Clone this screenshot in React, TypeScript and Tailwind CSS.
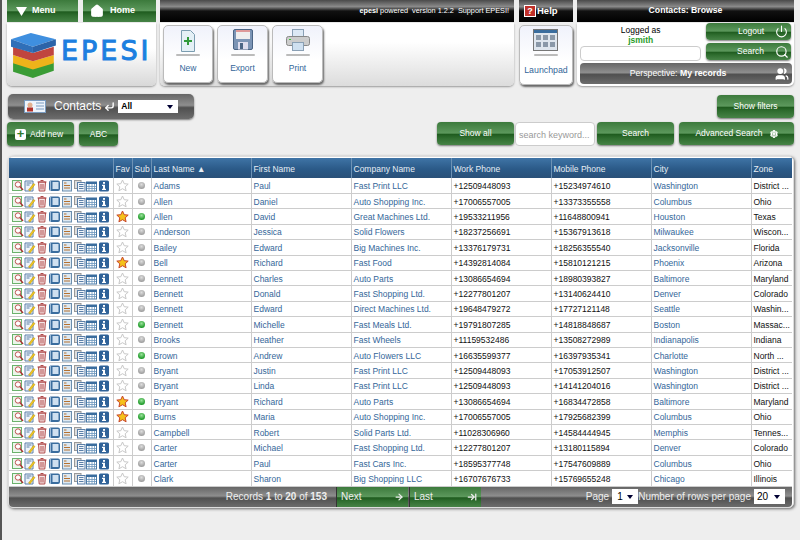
import { Search, Power, Users, Home, Settings, ArrowRight, ArrowRightToLine, CornerDownLeft } from 'lucide-react'

const rows = [
  ['Adams', 'Paul', 'Fast Print LLC', '+12509448093', '+15234974610', 'Washington', 'District ...', 0, 0],
  ['Allen', 'Daniel', 'Auto Shopping Inc.', '+17006557005', '+13373355558', 'Columbus', 'Ohio', 0, 0],
  ['Allen', 'David', 'Great Machines Ltd.', '+19533211956', '+11648800941', 'Houston', 'Texas', 1, 1],
  ['Anderson', 'Jessica', 'Solid Flowers', '+18237256691', '+15367913618', 'Milwaukee', 'Wiscon...', 0, 0],
  ['Bailey', 'Edward', 'Big Machines Inc.', '+13376179731', '+18256355540', 'Jacksonville', 'Florida', 0, 0],
  ['Bell', 'Richard', 'Fast Food', '+14392814084', '+15810121215', 'Phoenix', 'Arizona', 1, 0],
  ['Bennett', 'Charles', 'Auto Parts', '+13086654694', '+18980393827', 'Baltimore', 'Maryland', 0, 0],
  ['Bennett', 'Donald', 'Fast Shopping Ltd.', '+12277801207', '+13140624410', 'Denver', 'Colorado', 0, 0],
  ['Bennett', 'Edward', 'Direct Machines Ltd.', '+19648479272', '+17727121148', 'Seattle', 'Washin...', 0, 0],
  ['Bennett', 'Michelle', 'Fast Meals Ltd.', '+19791807285', '+14818848687', 'Boston', 'Massac...', 0, 1],
  ['Brooks', 'Heather', 'Fast Wheels', '+11159532486', '+13508272989', 'Indianapolis', 'Indiana', 0, 0],
  ['Brown', 'Andrew', 'Auto Flowers LLC', '+16635599377', '+16397935341', 'Charlotte', 'North ...', 0, 1],
  ['Bryant', 'Justin', 'Fast Print LLC', '+12509448093', '+17053912507', 'Washington', 'District ...', 0, 0],
  ['Bryant', 'Linda', 'Fast Print LLC', '+12509448093', '+14141204016', 'Washington', 'District ...', 0, 0],
  ['Bryant', 'Richard', 'Auto Parts', '+13086654694', '+16834472858', 'Baltimore', 'Maryland', 1, 1],
  ['Burns', 'Maria', 'Auto Shopping Inc.', '+17006557005', '+17925682399', 'Columbus', 'Ohio', 1, 1],
  ['Campbell', 'Robert', 'Solid Parts Ltd.', '+11028306960', '+14584444945', 'Memphis', 'Tennes...', 0, 0],
  ['Carter', 'Michael', 'Fast Shopping Ltd.', '+12277801207', '+13180115894', 'Denver', 'Colorado', 0, 0],
  ['Carter', 'Paul', 'Fast Cars Inc.', '+18595377748', '+17547609889', 'Columbus', 'Ohio', 0, 0],
  ['Clark', 'Sharon', 'Big Shopping LLC', '+16707676733', '+15769655248', 'Chicago', 'Illinois', 0, 0],
] as const

const greenFill = 'bg-[linear-gradient(#3c7a3c_0%,#5c985c_48%,#1f5c1f_54%,#2f6d2f_70%,#468346_100%)]'
const greenBtn = `flex items-center justify-center text-white text-[8.5px] whitespace-nowrap ${greenFill}`
const raised = 'rounded-[4px] shadow-[0_1px_2px_#777]'
const darkBar = 'bg-[linear-gradient(#4a4a4a_0%,#8a8a8a_30%,#111_50%,#000_100%)]'
const grayBar = 'bg-[linear-gradient(#666_0%,#8e8e8e_45%,#505050_55%,#6c6c6c_100%)]'
const linkCell = 'text-[#336699] px-[2px] pt-[2px] leading-[11px] border-r border-[#ccc] overflow-hidden whitespace-nowrap'
const cell = 'text-[#111] px-[2px] pt-[2px] leading-[11px] border-r border-[#ccc] overflow-hidden whitespace-nowrap'

function RowIcons() {
  return (
    <svg width="98" height="13" viewBox="0 0 98 13" className="block">
      <rect x="0.500" y="1.500" width="9" height="10" fill="#eaf6ea" stroke="#6cb26c" />
      <circle cx="6" cy="5.500" r="2.700" fill="#fff" stroke="#c05050" />
      <path d="M8 7.500l3 3.500" stroke="#a33" strokeWidth="1.400" />
      <path d="M13 2h8v10h-8z" fill="#eef3fa" stroke="#5a7fa8" />
      <path d="M14.500 4h5M14.500 6h3" stroke="#5a7fa8" />
      <path d="M16.500 11l5-6.500 1.500 1-5 6.500z" fill="#f2c81e" stroke="#b28a10" strokeWidth=".5" />
      <path d="M26.500 3h7l-.7 9h-5.600zM25.500 3h9M28.500 1.500h3" fill="#f6e6e6" stroke="#b04a4a" />
      <path d="M29 5v5.500M31 5v5.500" stroke="#b04a4a" />
      <rect x="37" y="1.500" width="11" height="10.500" rx="2" fill="#3a6d9e" />
      <rect x="40.500" y="3" width="6" height="7" fill="#cfe0f0" />
      <path d="M38.500 1.500v10.500" stroke="#9dbbd8" />
      <rect x="50.500" y="1.500" width="9" height="10.500" fill="#dce8f2" stroke="#6b8eae" />
      <path d="M52 4h2.500M52 6.500h6M52 9h6" stroke="#b5702f" />
      <rect x="62.500" y="1.500" width="6.500" height="8" fill="#ddd" stroke="#999" />
      <rect x="65.500" y="3.500" width="7.500" height="8.500" fill="#f2f6fa" stroke="#5a7fa8" />
      <path d="M67 5.500h4.500M67 7.500h4.500M67 9.500h4.500" stroke="#5a7fa8" />
      <rect x="74.500" y="3.500" width="10" height="8.500" fill="#fff" stroke="#4b7aa6" />
      <rect x="74" y="2.500" width="11" height="2.500" fill="#3a6d9e" />
      <path d="M77 5v7M80 5v7M82.500 5v7M75 7.500h9M75 9.500h9" stroke="#6b95bd" strokeWidth=".8" />
      <rect x="87" y="1.500" width="10" height="11" rx="1.500" fill="#2f6298" />
      <rect x="91" y="3" width="2" height="1.800" fill="#fff" />
      <path d="M90 5.800h3v4h1V11h-4V9.800h1v-2.800h-1z" fill="#fff" />
    </svg>
  )
}

function Star({ on }: { on: boolean }) {
  return (
    <svg width="13" height="13" viewBox="0 0 13 13" className="block mx-auto">
      <path
        d="M6.500 1l1.700 3.700 4 .4-3 2.700.9 4-3.600-2.100-3.600 2.100.9-4-3-2.700 4-.4z"
        fill={on ? '#f5c21b' : '#fff'}
        stroke={on ? '#c8452a' : '#c8c8c8'}
      />
    </svg>
  )
}

function Dot({ on }: { on: boolean }) {
  return (
    <div
      className={
        on
          ? 'w-[7px] h-[7px] mx-auto rounded-full bg-[radial-gradient(circle_at_50%_35%,#9be39b,#1f9a2a_70%)]'
          : 'w-[7px] h-[7px] mx-auto rounded-full bg-[radial-gradient(circle_at_50%_35%,#ddd,#a0a0a0_70%)]'
      }
    />
  )
}

function BigButton({ label, children, w }: { label: string; children: React.ReactNode; w: string }) {
  return (
    <div className={`${w} h-[58px] flex flex-col items-center rounded-[5px] border border-[#bbb] bg-[linear-gradient(#f0f2fb,#fff_60%)] shadow-[1px_2px_2px_#666] pt-[3px]`}>
      <div className="h-[24px]">{children}</div>
      <div className="w-[24px] h-[2px] mt-[1px] rounded-full bg-[#bbb]" />
      <div className="text-[#336699] text-[8.500px] mt-[6px] leading-[12px]">{label}</div>
    </div>
  )
}

export default function App() {
  return (
    <div className="w-[800px] h-[540px] overflow-hidden bg-[#eeeeee] border-l-2 border-[#555] pl-[5px] pr-[6px] text-[8.500px] font-['Liberation_Sans',sans-serif]">
      <div className="flex gap-[4px]">
        <div className="w-[149px] shrink-0">
          <div className="flex gap-[5px] h-[22px]">
            <div className={`${greenBtn} w-[71px] gap-[5px] text-[9px] font-bold justify-start! pl-[9px]`}>
              <svg width="11" height="9" viewBox="0 0 11 9"><path d="M0 0h11L5.500 9z" fill="#fff" /></svg>
              Menu
            </div>
            <div className={`${greenBtn} w-[73px] gap-[6px] text-[9px] font-bold justify-start! pl-[7px]`}>
              <Home size={14} fill="#fff" />
              Home
            </div>
          </div>
          <div className="mt-[1px] h-[63px] rounded-b-[5px] bg-[linear-gradient(#fff_40%,#d8d8d8)] shadow-[0_1px_2px_#999] flex items-center pl-[4px]">
            <svg width="48" height="48" viewBox="0 0 46 46" className="shrink-0">
              <path d="M2 30l19 6 20-6v8l-20 7-19-6z" fill="#3a9c35" />
              <path d="M2 23l19 6 20-6v8l-20 6-19-6z" fill="#eeb31a" />
              <path d="M2 15l19 6 20-6v8l-20 6-19-6z" fill="#c0453f" />
              <path d="M0 8l19-6 24 6-22 7z" fill="#3f8fdf" />
              <path d="M0 8l21 7v6L0 15z" fill="#2f6fb8" />
              <path d="M21 15l22-7v6l-22 7z" fill="#2c63a8" />
            </svg>
            <span className="text-[#1c7fe0] text-[27px] leading-none font-['DejaVu_Sans',sans-serif] tracking-[3px] [-webkit-text-stroke:1px_#1c7fe0] ml-[2px] mt-[-8px]">EPESI</span>
          </div>
        </div>

        <div className="w-[354px] shrink-0">
          <div className={`${darkBar} h-[22px] flex items-center justify-end pr-[5px] gap-[4px] text-[7.300px] text-white`}>
            <span><b>epesi</b> powered</span>
            <span>version 1.2.2</span>
            <span>Support EPESI!</span>
          </div>
          <div className="mt-[1px] h-[63px] rounded-b-[5px] bg-[linear-gradient(#fff_30%,#dcdcdc)] shadow-[0_1px_2px_#999] flex gap-[4px] pl-[3px] pt-[2px]">
            <BigButton label="New" w="w-[50px]">
              <svg width="16" height="24" viewBox="0 0 16 24">
                <path d="M1.500 1.500h9l4 4v17h-13z" fill="#e4f0f6" stroke="#7a9cb0" />
                <path d="M7 8h2v3h3v2H9v3H7v-3H4v-2h3z" fill="#2f9a3a" />
              </svg>
            </BigButton>
            <BigButton label="Export" w="w-[51px]">
              <svg width="20" height="22" viewBox="0 0 20 22">
                <rect x="0.500" y="0.500" width="19" height="20" rx="1.500" fill="#7b94b5" stroke="#4b6585" />
                <rect x="3" y="1" width="14" height="9" fill="#eee" />
                <path d="M3 2h14" stroke="#c44" />
                <rect x="5" y="13" width="10" height="7.500" fill="#dde" />
                <rect x="7" y="14" width="3" height="6" fill="#4b6585" />
              </svg>
            </BigButton>
            <BigButton label="Print" w="w-[51px]">
              <svg width="24" height="22" viewBox="0 0 24 22">
                <rect x="6.500" y="0.500" width="11" height="8" fill="#dce8f4" stroke="#8aa0b5" />
                <rect x="0.500" y="7.500" width="23" height="9" rx="2" fill="#ccc" stroke="#888" />
                <rect x="6.500" y="13.500" width="11" height="8" fill="#cfe0f0" stroke="#8aa0b5" />
                <rect x="3" y="10" width="2" height="1" fill="#3c3" />
              </svg>
            </BigButton>
          </div>
        </div>

        <div className="w-[54px] ml-[1px] shrink-0">
          <div className={`${darkBar} h-[22px] flex items-center pl-[5px] gap-[1px] text-white text-[9.500px] font-bold`}>
            <span className="w-[12px] h-[12px] bg-[#c0302a] border border-white text-[9px] leading-[10px] text-center">?</span>
            Help
          </div>
          <div className="mt-[3px] h-[60px] flex flex-col items-center rounded-[5px] border border-[#bbb] bg-[linear-gradient(#f0f2fb,#fff_60%)] shadow-[1px_2px_2px_#666] pt-[3px]">
            <svg width="26" height="24" viewBox="0 0 26 24">
              <rect x="0.500" y="0.500" width="24" height="21" fill="#dfe6ee" stroke="#777" />
              <rect x="1" y="1" width="23" height="3" fill="#3a6d9e" />
              <path d="M3 6h5v5H3zM10 6h5v5h-5zM17 6h5v5h-5zM3 13h5v5H3zM10 13h5v5h-5zM17 13h5v5h-5z" fill="#8a98a8" />
            </svg>
            <div className="w-[24px] h-[2px] mt-[1px] rounded-full bg-[#bbb]" />
            <div className="text-[#336699] text-[8.800px] mt-[8px] leading-[12px]">Launchpad</div>
          </div>
        </div>

        <div className="w-[217px] shrink-0">
          <div className={`${darkBar} h-[22px] flex items-center justify-center text-white text-[8.700px] font-bold`}>Contacts: Browse</div>
          <div className="mt-[1px] h-[63px] bg-white rounded-b-[5px] shadow-[0_1px_2px_#999] px-[3px]">
            <div className="flex gap-[5px]">
              <div className="w-[122px]">
                <div className="text-center text-[8.500px] leading-[10px] mt-[2px] text-black">Logged as</div>
                <div className="text-center text-[8.500px] leading-[10px] font-bold text-[#2a9d2a]">jsmith</div>
                <div className="h-[15px] mt-[1px] rounded-[4px] border border-[#ccc] bg-white" />
              </div>
              <div className="w-[85px]">
                <div className={`${greenBtn} ${raised} h-[17px] justify-end! gap-[11px] pr-[3px]`}>
                  Logout
                  <Power size={13} />
                </div>
                <div className={`${greenBtn} ${raised} h-[17px] mt-[3px] justify-end! gap-[11px] pr-[2px]`}>
                  Search
                  <Search size={14} />
                </div>
              </div>
            </div>
            <div className={`${grayBar} mt-[2px] h-[21px] w-[212px] rounded-[4px] flex items-center text-white text-[8.700px]`}>
              <div className="flex-1 text-center pl-[1px]">Perspective: <b>My records</b></div>
              <Users size={14} fill="#fff" className="mr-[3px]" />
            </div>
          </div>
        </div>
      </div>

      <div className="flex justify-between mt-[8px]">
        <div className={`${grayBar} ml-[1px] w-[186px] h-[25px] rounded-[5px] shadow-[0_1px_2px_#777] flex items-center pl-[16px] text-white`}>
          <svg width="22" height="13" viewBox="0 0 22 13">
            <rect x="0.500" y="0.500" width="21" height="12" fill="#eef4fb" stroke="#7a9cc0" />
            <circle cx="6" cy="5" r="2.500" fill="#e3b18f" />
            <rect x="3" y="7.500" width="6" height="4" fill="#b3322a" />
            <path d="M12 3h8M12 6h8M12 9h8" stroke="#7a9cc0" />
          </svg>
          <span className="text-[12px] ml-[8px] mb-[2px]">Contacts</span>
          <CornerDownLeft size={11} className="ml-[3px]" strokeWidth={3} />
          <div className="ml-[3px] w-[60px] h-[13px] bg-white text-black text-[8.500px] leading-[13px] pl-[3px] font-bold relative">
            All
            <svg width="6" height="4" viewBox="0 0 6 4" className="absolute right-[5px] top-[5px]"><path d="M0 0h6L3 4z" fill="#003" /></svg>
          </div>
        </div>
        <div className={`${greenBtn} ${raised} w-[77px] h-[23px] mt-[1px]`}>Show filters</div>
      </div>

      <div className="flex mt-[3px] h-[24px] items-start">
        <div className={`${greenBtn} ${raised} w-[67px] h-[24px] gap-[4px] justify-start! pl-[8px]`}>
          <span className="w-[11px] h-[11px] rounded-[2px] bg-white text-[#2f7a2f] text-[13px] font-bold leading-[10px] text-center">+</span>
          Add new
        </div>
        <div className={`${greenBtn} ${raised} w-[39px] h-[24px] ml-[5px]`}>ABC</div>
        <div className={`${greenBtn} ${raised} w-[77px] h-[23px] ml-[319px]`}>Show all</div>
        <div className="w-[80px] h-[24px] ml-[1px] rounded-[4px] border border-[#ccc] bg-white text-[#999] text-[9px] leading-[24px] pl-[3px] whitespace-nowrap">search keyword...</div>
        <div className={`${greenBtn} ${raised} w-[77px] h-[23px] ml-[2px]`}>Search</div>
        <div className={`${greenBtn} ${raised} w-[115px] h-[23px] ml-[5px] gap-[7px]`}>
          Advanced Search
          <Settings size={8} strokeWidth={4} />
        </div>
      </div>

      <div className="ml-[1px] mt-[10px] w-[786px] h-[352px] bg-white rounded-[5px] pt-[1px] pr-[1px] shadow-[1px_1px_3px_#666] border border-[#ddd]">
        <table className="w-full table-fixed border-collapse text-[8.500px]">
          <colgroup>
            <col className="w-[104px]" />
            <col className="w-[19px]" />
            <col className="w-[19px]" />
            <col className="w-[100px]" />
            <col className="w-[100px]" />
            <col className="w-[100px]" />
            <col className="w-[100px]" />
            <col className="w-[100px]" />
            <col className="w-[100px]" />
            <col />
          </colgroup>
          <thead>
            <tr className="h-[20px] text-[#e8eef4] bg-[linear-gradient(#3f74a6,#2b5a88_55%,#2a5078)] text-left">
              {['', 'Fav', 'Sub', 'Last Name \u25B2', 'First Name', 'Company Name', 'Work Phone', 'Mobile Phone', 'City', 'Zone'].map((h, i) => (
                <th key={i} className="font-normal px-[2px] pt-[2px] leading-[11px] border-r border-[#6d92b5] last:border-r-0">{h}</th>
              ))}
            </tr>
          </thead>
          <tbody>
            {rows.map((r, i) => (
              <tr key={i} className="h-[15.420px] border-b border-[#ccc] leading-[11px]">
                <td className="pl-[3px] pr-0 border-r border-[#ccc]"><div className="h-[13px] overflow-hidden"><RowIcons /></div></td>
                <td className="border-r border-[#ccc]"><Star on={!!r[7]} /></td>
                <td className="border-r border-[#ccc]"><Dot on={!!r[8]} /></td>
                <td className={linkCell}>{r[0]}</td>
                <td className={linkCell}>{r[1]}</td>
                <td className={linkCell}>{r[2]}</td>
                <td className={cell}>{r[3]}</td>
                <td className={cell}>{r[4]}</td>
                <td className={linkCell}>{r[5]}</td>
                <td className="text-[#111] px-[2px] pt-[2px] leading-[11px] overflow-hidden whitespace-nowrap">{r[6]}</td>
              </tr>
            ))}
          </tbody>
        </table>
        <div className={`${grayBar} h-[20px] flex items-center text-[#eee] text-[10px] rounded-b-[4px]`}>
          <div className="w-[327px] text-right pr-[9px] shrink-0">Records <b>1</b> to <b>20</b> of <b>153</b></div>
          <div className={`w-[72px] h-[20px] flex items-center justify-between px-[4px] shrink-0 border-l border-[#333] ${greenFill}`}>
            Next
            <ArrowRight size={10} strokeWidth={3} />
          </div>
          <div className={`w-[72px] h-[20px] ml-[1px] flex items-center justify-between px-[4px] shrink-0 border-l border-[#333] ${greenFill}`}>
            Last
            <ArrowRightToLine size={10} strokeWidth={3} />
          </div>
          <div className="ml-auto flex items-center pr-[7px]">
            Page
            <div className="w-[26px] h-[15px] ml-[3px] bg-white text-black leading-[15px] pl-[5px] relative">
              1
              <svg width="6" height="4" viewBox="0 0 6 4" className="absolute right-[5px] top-[6px]"><path d="M0 0h6L3 4z" fill="#003" /></svg>
            </div>
            <span>Number of rows per page</span>
            <div className="w-[31px] h-[15px] ml-[3px] bg-white text-black leading-[15px] pl-[3px] relative">
              20
              <svg width="6" height="4" viewBox="0 0 6 4" className="absolute right-[5px] top-[6px]"><path d="M0 0h6L3 4z" fill="#003" /></svg>
            </div>
          </div>
        </div>
      </div>
    </div>
  )
}
